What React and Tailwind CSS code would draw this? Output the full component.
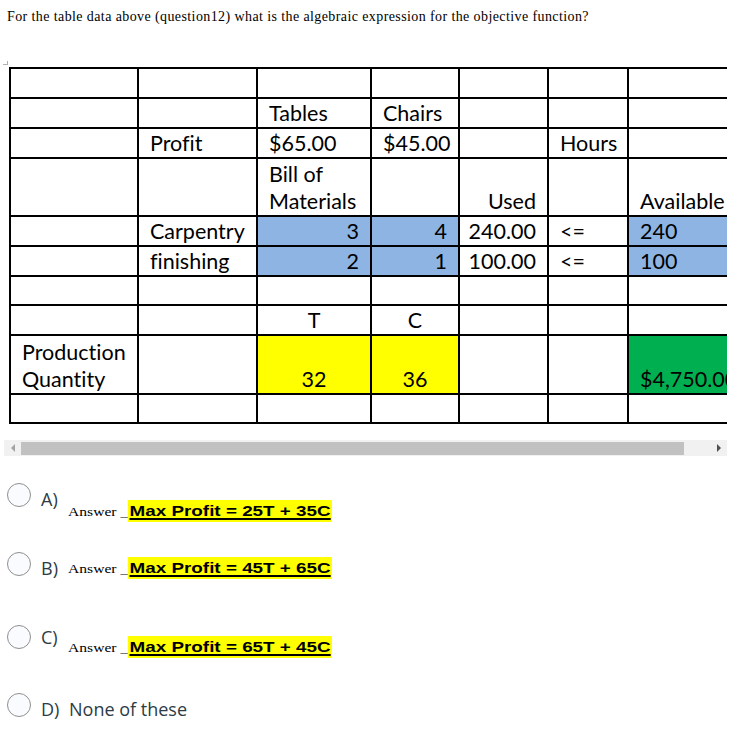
import React from "react";

const BLUE = "bg-[#8db4e2]";
const YELLOW = "bg-[#ffff00]";
const GREEN = "bg-[#00b050]";

const E = { t: "" };
const rows = [
  [E, E, E, E, E, E, E],
  [E, E, { t: "Tables" }, { t: "Chairs" }, E, E, E],
  [E, { t: "Profit" }, { t: "$65.00" }, { t: "$45.00" }, E, { t: "Hours" }, E],
  [E, E, { t: "Bill of\nMaterials" }, E, { t: "Used", a: "r" }, E, { t: "Available" }],
  [E, { t: "Carpentry" }, { t: "3", a: "r", bg: BLUE }, { t: "4", a: "r", bg: BLUE }, { t: "240.00", a: "r" }, { t: "<=" }, { t: "240", bg: BLUE }],
  [E, { t: "finishing" }, { t: "2", a: "r", bg: BLUE }, { t: "1", a: "r", bg: BLUE }, { t: "100.00", a: "r" }, { t: "<=" }, { t: "100", bg: BLUE }],
  [E, E, E, E, E, E, E],
  [E, E, { t: "T", a: "c" }, { t: "C", a: "c" }, E, E, E],
  [{ t: "Production\nQuantity" }, E, { t: "32", a: "c", bg: YELLOW }, { t: "36", a: "c", bg: YELLOW }, E, E, { t: "$4,750.00", bg: GREEN }],
  [E, E, E, E, E, E, E],
];

function Cell({ c }) {
  const align =
    c.a === "r" ? "items-end text-right" : c.a === "c" ? "items-center text-center" : "items-start text-left";
  const lines = c.t ? c.t.split("\n") : [];
  return (
    <div className={`flex flex-col justify-end px-[11px] whitespace-nowrap ${align} ${c.bg || "bg-white"}`}>
      {lines.map((l, i) => (
        <div key={i} className="leading-[27px]">
          {l}
        </div>
      ))}
    </div>
  );
}

function Radio() {
  return <div className="w-6 h-6 shrink-0 rounded-full border border-[#8f8f8f] bg-[#fafbff]" />;
}

function Answer({ expr }) {
  return (
    <div className="origin-left scale-x-[1.3] flex items-baseline whitespace-nowrap">
      <span className="font-['Liberation_Serif',serif] text-[12px] leading-none text-black">Answer _</span>
      <span className="inline-block bg-[#ffff00] px-[1px] font-['Liberation_Sans',Arial,sans-serif] font-bold text-[14.5px] leading-[22px] text-black underline decoration-[1.5px] underline-offset-[2px]">
        {expr}
      </span>
    </div>
  );
}

export default function App() {
  return (
    <div className="w-[745px] bg-white">
      <p className="pl-[7px] pt-[9px] font-['Liberation_Serif',serif] text-[14px] tracking-[0.4px] leading-[16px] text-black whitespace-nowrap">
        For the table data above (question12) what is the algebraic expression for the objective function?
      </p>

      <div className="relative mt-[42px] ml-[4px] w-[723px]">
        <div className="absolute left-[-1px] top-[-6px] w-[5px] h-[4px] border-r border-b border-[#b0b0b0]" />
        <div className="ml-[5px] w-[718px] overflow-hidden">
          <div className="grid w-[734px] grid-cols-[126px_117px_112px_86px_87px_78px_110px] grid-rows-[28px_28px_28px_56px_28px_28px_27px_28px_57px_27px] gap-[2px] p-[2px] bg-black font-['Lato',sans-serif] text-[21.5px] [font-variant-ligatures:none] text-black">
            {rows.map((r, ri) => r.map((c, ci) => <Cell key={`${ri}-${ci}`} c={c} />))}
          </div>
        </div>

        <div className="mt-[16px] h-[16px] bg-[#f1f1f1] flex items-center">
          <div className="w-[17px] flex justify-center">
            <div className="w-0 h-0 border-y-[4px] border-y-transparent border-r-[4px] border-r-[#a3a3a3]" />
          </div>
          <div className="h-[13px] w-[663px] bg-[#c1c1c1]" />
          <div className="flex-1 flex justify-end pr-[6px]">
            <div className="w-0 h-0 border-y-[4px] border-y-transparent border-l-[4px] border-l-[#505050]" />
          </div>
        </div>
      </div>

      <div className="mt-[27px] pl-[7px] font-['Open_Sans',sans-serif] text-[18px] text-[#2d3b45]">
        <div className="flex h-[69px]">
          <Radio />
          <div className="ml-[10px] w-[27px] mt-[6px] leading-[20px]">A)</div>
          <div className="mt-[17px]">
            <Answer expr="Max Profit = 25T + 35C" />
          </div>
        </div>
        <div className="flex h-[73px]">
          <Radio />
          <div className="ml-[10px] w-[27px] mt-[6px] leading-[20px]">B)</div>
          <div className="mt-[5px]">
            <Answer expr="Max Profit = 45T + 65C" />
          </div>
        </div>
        <div className="flex h-[68px]">
          <Radio />
          <div className="ml-[10px] w-[27px] mt-[2px] leading-[20px]">C)</div>
          <div className="mt-[11px]">
            <Answer expr="Max Profit = 65T + 45C" />
          </div>
        </div>
        <div className="flex h-[59px]">
          <Radio />
          <div className="ml-[10px] w-[28px] mt-[6px] leading-[20px]">D)</div>
          <div className="mt-[6px] leading-[20px]">None of these</div>
        </div>
      </div>
    </div>
  );
}
